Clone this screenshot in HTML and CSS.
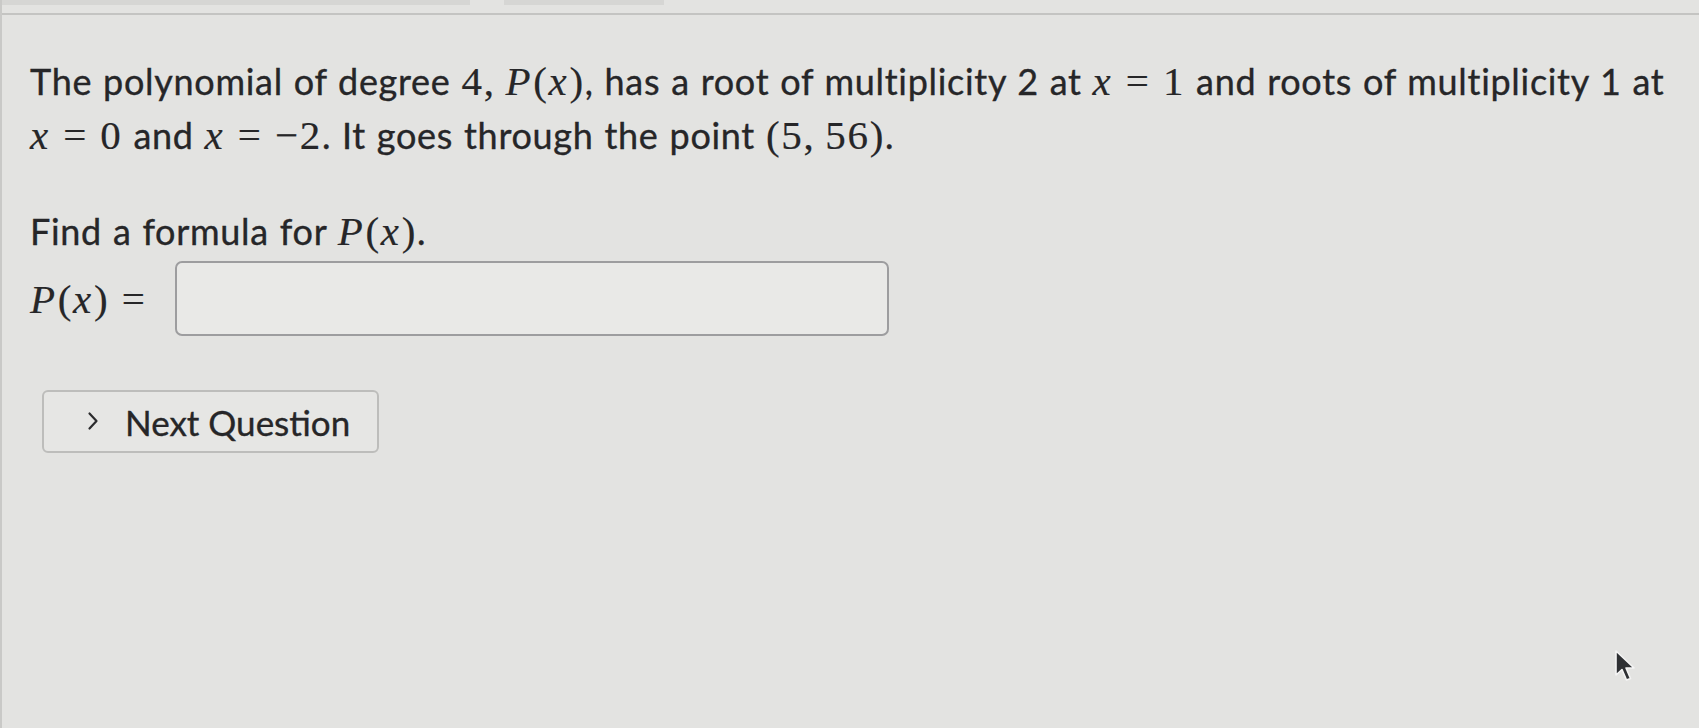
FILE: index.html
```html
<!DOCTYPE html>
<html lang="en">
<head>
<meta charset="utf-8">
<title>Polynomial question</title>
<link rel="stylesheet" href="styles.css">
</head>
<body>
<div class="page">
  <div class="topbar"><span class="tab tab-a"></span><span class="tab tab-b"></span></div>
  <main class="content">
    <p class="q">The polynomial of degree <span class="m">4,<span class="thin"></span><i>P</i>(<i>x</i>)</span>, has a root of multiplicity 2 at <span class="m"><i>x</i><span class="rel">=</span>1</span> and roots of multiplicity 1 at <span class="m"><i>x</i><span class="rel">=</span>0</span> and <span class="m"><i>x</i><span class="rel">=</span>&minus;2</span>. It goes through the point <span class="m">(5,<span class="thin"></span>56)</span>.</p>
    <p class="q find">Find a formula for <span class="m"><i>P</i>(<i>x</i>)</span>.</p>
    <div class="answer-row">
      <span class="m label"><i>P</i>(<i>x</i>)<span class="rel">=</span></span>
      <div class="answer-box"></div>
    </div>
    <button class="next-btn" type="button">
      <svg class="chev" width="12" height="20" viewBox="0 0 12 20" aria-hidden="true"><path d="M2.5 2.5 L9.5 10 L2.5 17.5" fill="none" stroke="#2b2b2d" stroke-width="2.2" stroke-linecap="round" stroke-linejoin="round"/></svg>
      <span class="btn-text">Next Question</span>
    </button>
  </main>
  <svg class="cursor" width="24" height="36" viewBox="0 0 24 36" aria-hidden="true">
    <path d="M2 2 L2 26 L8 20.5 L12.5 31 L16.5 29.5 L12 19 L20 19 Z" fill="#2e3033" stroke="#f4f4f4" stroke-width="1.6" stroke-linejoin="round"/>
  </svg>
</div>
</body>
</html>
```

FILE: styles.css
```css
html, body {
  margin: 0;
  padding: 0;
}
body {
  background: #e3e3e1;
  font-family: "Lato", "Liberation Sans", sans-serif;
  color: #262628;
}
.page {
  position: relative;
  width: 1699px;
  height: 728px;
  overflow: hidden;
  border-left: 2px solid #c9c9c7;
  box-sizing: border-box;
}
.topbar {
  height: 13px;
  border-bottom: 2px solid #c4c4c2;
  display: flex;
  gap: 34px;
}
.tab {
  display: block;
  height: 5px;
  background: #d6d6d4;
}
.tab-a { width: 468px; }
.tab-b { width: 160px; }
.content {
  padding: 39px 0 0 28px;
}
.q {
  margin: 0;
  font-size: 36px;
  line-height: 54px;
  letter-spacing: 0.7px;
  word-spacing: 1px;
  -webkit-text-stroke: 0.35px #262628;
}
.find {
  margin-top: 42px;
}
.m {
  font-family: "Liberation Serif", "DejaVu Serif", serif;
  font-size: 41px;
  letter-spacing: 1.7px;
  word-spacing: 0;
  white-space: nowrap;
  -webkit-text-stroke: 0.2px #262628;
}
.m i {
  font-style: italic;
  padding-right: 1px;
}
.rel {
  padding: 0 0.3em;
}
.thin {
  display: inline-block;
  width: 0.24em;
}
.answer-row {
  display: flex;
  align-items: center;
  gap: 28px;
  margin-top: 3px;
}
.label {
  line-height: 74px;
}
.label .rel {
  padding-right: 0;
}
.answer-box {
  width: 714px;
  height: 75px;
  box-sizing: border-box;
  border: 2px solid #9d9d9f;
  border-radius: 7px;
  background: #e9e9e7;
}
.next-btn {
  display: flex;
  align-items: center;
  margin: 54px 0 0 12px;
  width: 337px;
  height: 63px;
  box-sizing: border-box;
  padding: 0 0 0 43px;
  border: 2px solid #bdbdbb;
  border-radius: 6px;
  background: #e6e6e4;
  font-family: "Lato", "Liberation Sans", sans-serif;
  color: #262628;
  cursor: pointer;
}
.chev {
  flex: none;
  margin-right: 26px;
  margin-top: -2px;
}
.btn-text {
  font-size: 35px;
  letter-spacing: 0;
  -webkit-text-stroke: 0.35px #262628;
}
.cursor {
  position: absolute;
  left: 1612px;
  top: 649px;
}
```
